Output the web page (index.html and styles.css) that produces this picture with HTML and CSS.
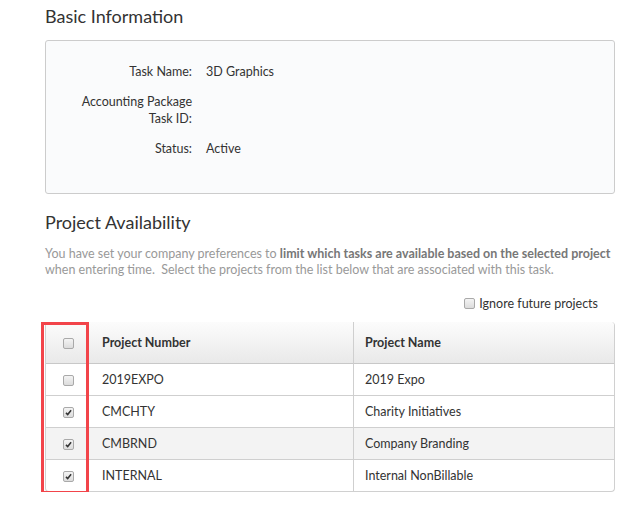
FILE: index.html
```html
<!DOCTYPE html>
<html>
<head>
<meta charset="utf-8">
<link rel="stylesheet" href="styles.css">
</head>
<body>
<div class="page">
  <h2 class="section-title">Basic Information</h2>
  <div class="info-box">
    <div class="info-grid">
      <div class="lbl">Task Name:</div><div class="val">3D Graphics</div>
      <div class="lbl">Accounting Package<br>Task ID:</div><div class="val"></div>
      <div class="lbl">Status:</div><div class="val">Active</div>
    </div>
  </div>

  <h2 class="section-title second">Project Availability</h2>
  <p class="note">You have set your company preferences to <b>limit which tasks are available based on the selected project</b> when entering time.&nbsp; Select the projects from the list below that are associated with this task.</p>

  <div class="ignore-row">
    <span class="cb"></span><span class="ignore-text">Ignore future projects</span>
  </div>

  <div class="table-wrap">
    <table class="proj">
      <thead>
        <tr><th class="c1"><span class="cb"></span></th><th class="c2">Project Number</th><th class="c3">Project Name</th></tr>
      </thead>
      <tbody>
        <tr><td class="c1"><span class="cb"></span></td><td class="c2">2019EXPO</td><td class="c3">2019 Expo</td></tr>
        <tr><td class="c1"><span class="cb on"><svg viewBox="0 0 10 10" width="10" height="10"><path d="M2.2 5.4 L4.1 7.3 L7.9 2.6" fill="none" stroke="#333" stroke-width="1.7"/></svg></span></td><td class="c2">CMCHTY</td><td class="c3">Charity Initiatives</td></tr>
        <tr class="shade"><td class="c1"><span class="cb on"><svg viewBox="0 0 10 10" width="10" height="10"><path d="M2.2 5.4 L4.1 7.3 L7.9 2.6" fill="none" stroke="#333" stroke-width="1.7"/></svg></span></td><td class="c2">CMBRND</td><td class="c3">Company Branding</td></tr>
        <tr><td class="c1"><span class="cb on"><svg viewBox="0 0 10 10" width="10" height="10"><path d="M2.2 5.4 L4.1 7.3 L7.9 2.6" fill="none" stroke="#333" stroke-width="1.7"/></svg></span></td><td class="c2">INTERNAL</td><td class="c3">Internal NonBillable</td></tr>
      </tbody>
    </table>
    <div class="highlight"></div>
  </div>
</div>
</body>
</html>
```

FILE: styles.css
```css
html, body {
  margin: 0;
  padding: 0;
  background: #fff;
}
body {
  font-family: Lato, "Open Sans", sans-serif;
  color: #333;
  font-size: 12.5px;
}
.page {
  padding: 5px 26px 0 45px;
  width: 570px;
}
.section-title {
  margin: 0;
  font-size: 18px;
  font-weight: 400;
  line-height: 22px;
  color: #333;
}
.section-title.second {
  margin-top: 17px;
}
.info-box {
  margin-top: 13px;
  height: 152px;
  border: 1px solid #ccc;
  border-radius: 3px;
  background: #fafbfc;
  box-sizing: content-box;
}
.info-grid {
  display: grid;
  grid-template-columns: 146px 1fr;
  column-gap: 14px;
  row-gap: 13px;
  padding-top: 22px;
  line-height: 17px;
}
.lbl {
  text-align: right;
}
.note {
  margin: 13px 0 0 0;
  font-size: 12.5px;
  line-height: 16px;
  color: #999;
}
.note b {
  color: #777;
  font-weight: 700;
}
.ignore-row {
  display: flex;
  justify-content: flex-end;
  align-items: center;
  gap: 4px;
  margin-top: 17px;
  padding-right: 17px;
  line-height: 17px;
}
.cb {
  display: inline-flex;
  align-items: center;
  justify-content: center;
  width: 9px;
  height: 9px;
  border: 1px solid #a9a9a9;
  border-radius: 2px;
  background: linear-gradient(#f4f4f4, #dcdcdc);
  vertical-align: middle;
}
.cb svg {
  display: block;
  width: 9px;
  height: 9px;
}
.table-wrap {
  position: relative;
  margin-top: 10px;
}
.proj {
  width: 570px;
  border-collapse: separate;
  border-spacing: 0;
  border: 1px solid #d0d0d0;
  border-top: none;
  border-radius: 4px;
  table-layout: fixed;
}
.proj th, .proj td {
  text-align: left;
  padding: 0;
}
.proj th {
  height: 41px;
  font-weight: 700;
  background: linear-gradient(#fcfcfc, #e9e9e9);
  border-bottom: 1px solid #c8c8c8;
}
.proj thead tr th:first-child { border-top-left-radius: 4px; }
.proj thead tr th:last-child { border-top-right-radius: 4px; }
.proj td {
  height: 31px;
  border-bottom: 1px solid #cfcfcf;
}
.proj tbody tr:last-child td {
  border-bottom: none;
}
.proj .c1 {
  width: 44px;
  text-align: center;
}
.proj .c2 {
  width: 251px;
  padding-left: 12px;
  border-right: 1px solid #cfcfcf;
}
.proj .c3 {
  padding-left: 11px;
}
.proj tr.shade td {
  background: #f3f3f3;
}
.highlight {
  position: absolute;
  left: -4px;
  top: 0;
  width: 42px;
  height: 166px;
  border: 3px solid #f2444a;
}
```
